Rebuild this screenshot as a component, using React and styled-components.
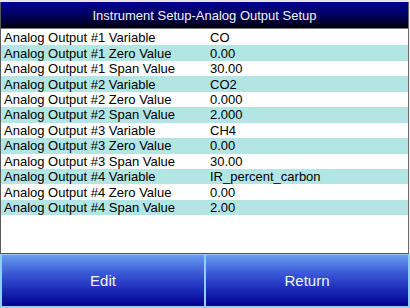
import React from "react";
import styled, { createGlobalStyle } from "styled-components";

const Global = createGlobalStyle`
  html, body { margin: 0; padding: 0; background: #ffffff; }
  body { font-family: "Liberation Sans", Arial, sans-serif; }
`;

const Screen = styled.div`
  width: 410px;
  height: 308px;
  display: flex;
  flex-direction: column;
  overflow: hidden;
  background: #f0f0f0;
`;

const TopStrip = styled.div`
  height: 2px;
  background: #e4e6ea;
  flex: none;
`;

const Panel = styled.div`
  flex: 1;
  display: flex;
  flex-direction: column;
  margin-right: 1px;
  border-left: 1px solid #5a5a5a;
  border-right: 1px solid #6a6a6a;
  border-bottom: 1px solid #4a5560;
  background: #ffffff;
`;

const Header = styled.div`
  height: 26px;
  flex: none;
  display: flex;
  align-items: center;
  justify-content: center;
  background: linear-gradient(to bottom, #00008e 0%, #000060 50%, #00000e 100%);
  color: #f2f2f2;
  font-size: 13px;
  border-bottom: 1px solid #7a7a7a;
`;

const List = styled.div`
  flex: 1;
  display: flex;
  flex-direction: column;
  padding-top: 1px;
`;

const Row = styled.div`
  display: grid;
  grid-template-columns: 206px 1fr;
  height: 15.45px;
  align-items: center;
  padding-left: 3px;
  font-size: 13px;
  color: #000;
  background: ${(p) => (p.$alt ? "#b2e5e4" : "#ffffff")};
`;

const Cell = styled.span`
  white-space: nowrap;
  line-height: 15px;
`;

const ButtonBar = styled.div`
  height: 51px;
  flex: none;
  display: grid;
  grid-template-columns: 1fr 1fr;
  gap: 2px;
  background: #8fd0f0;
  padding: 1px 2px 2px 2px;
`;

const Button = styled.button`
  border: none;
  margin: 0;
  padding: 0;
  font-family: "Liberation Sans", Arial, sans-serif;
  font-size: 15px;
  color: #f4f4f4;
  background: linear-gradient(to bottom, #6a9cf0 0%, #3c5ad8 35%, #1a28b8 70%, #00008c 100%);
  cursor: pointer;
`;

const rows = [
  ["Analog Output #1 Variable", "CO"],
  ["Analog Output #1 Zero Value", "0.00"],
  ["Analog Output #1 Span Value", "30.00"],
  ["Analog Output #2 Variable", "CO2"],
  ["Analog Output #2 Zero Value", "0.000"],
  ["Analog Output #2 Span Value", "2.000"],
  ["Analog Output #3 Variable", "CH4"],
  ["Analog Output #3 Zero Value", "0.00"],
  ["Analog Output #3 Span Value", "30.00"],
  ["Analog Output #4 Variable", "IR_percent_carbon"],
  ["Analog Output #4 Zero Value", "0.00"],
  ["Analog Output #4 Span Value", "2.00"],
];

export default function App() {
  return (
    <>
      <Global />
      <Screen>
        <TopStrip />
        <Panel>
          <Header>Instrument Setup-Analog Output Setup</Header>
          <List>
            {rows.map(([label, value], i) => (
              <Row key={label} $alt={i % 2 === 1}>
                <Cell>{label}</Cell>
                <Cell>{value}</Cell>
              </Row>
            ))}
          </List>
        </Panel>
        <ButtonBar>
          <Button>Edit</Button>
          <Button>Return</Button>
        </ButtonBar>
      </Screen>
    </>
  );
}
